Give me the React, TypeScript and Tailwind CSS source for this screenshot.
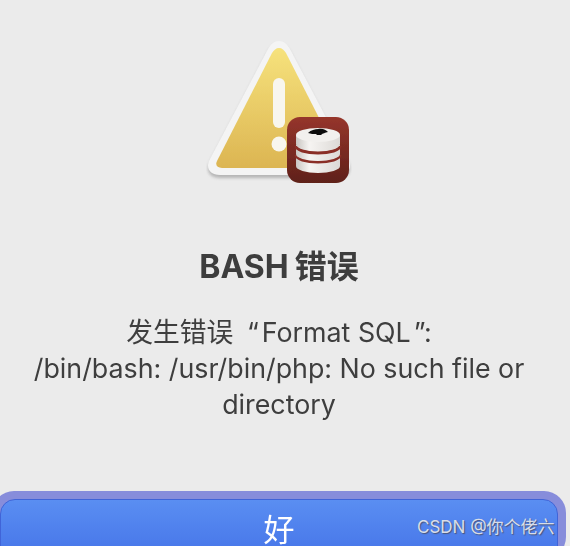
export default function App() {
  const font = { fontFamily: 'Inter, "Noto Sans CJK SC", sans-serif' };
  return (
    <div className="relative w-[570px] h-[546px] overflow-hidden bg-[#ebebeb]" style={font}>
      <div className="w-[558px] flex flex-col items-center blur-[0.4px]">
        <svg className="mt-[38px] shrink-0" width="146" height="148" viewBox="0 0 146 148">
          <defs>
            <linearGradient id="y" x1="0" y1="0" x2="0" y2="1">
              <stop offset="0" stopColor="#f6e27c" />
              <stop offset="1" stopColor="#dcb552" />
            </linearGradient>
            <linearGradient id="r" x1="0" y1="0" x2="0" y2="1">
              <stop offset="0" stopColor="#96352c" />
              <stop offset="1" stopColor="#5f2119" />
            </linearGradient>
            <linearGradient id="d" x1="0" y1="0" x2="1" y2="0">
              <stop offset="0" stopColor="#c9c6c2" />
              <stop offset="0.3" stopColor="#f6f4f2" />
              <stop offset="1" stopColor="#dcd9d6" />
            </linearGradient>
            <filter id="b" x="-20%" y="-20%" width="140%" height="140%"><feGaussianBlur stdDeviation="1.6" /></filter>
            <filter id="s" x="-5%" y="-5%" width="110%" height="110%"><feGaussianBlur stdDeviation="0.5" /></filter>
          </defs>
          <path d="M73 3 C78 3 81 6 84 11 L142 121 C147 130 142 137 132 137 L14 137 C4 137 -1 130 4 121 L62 11 C65 6 68 3 73 3 Z" fill="#a8a8a8" opacity="0.8" filter="url(#b)" transform="translate(0 3)" />
          <g filter="url(#s)">
            <path d="M73 3 C78 3 81 6 84 11 L142 121 C147 130 142 137 132 137 L14 137 C4 137 -1 130 4 121 L62 11 C65 6 68 3 73 3 Z" fill="#f4f4f4" />
            <path d="M73 10 C76 10 78 12 80 15 L135 123 C137 127 135 130 130 130 L16 130 C11 130 9 127 11 123 L66 15 C68 12 70 10 73 10 Z" fill="url(#y)" />
            <rect x="67" y="40" width="12" height="50" rx="6" fill="#f8f6ee" />
            <circle cx="73" cy="106" r="7.5" fill="#f8f6ee" />
          </g>
          <g filter="url(#s)" transform="translate(81 79)">
            <rect x="0" y="0" width="62" height="66" rx="13" fill="url(#r)" />
            <path d="M9 40 V49 A22 7 0 0 0 53 49 V40 Z" fill="url(#d)" />
            <path d="M9 38 A22 7 0 0 0 53 38" fill="none" stroke="#8a2f27" strokeWidth="3" />
            <path d="M9 28 V37 A22 7 0 0 0 53 37 V28 Z" fill="url(#d)" />
            <path d="M9 29 A22 7 0 0 0 53 29" fill="none" stroke="#8a2f27" strokeWidth="3" />
            <path d="M9 18 V27 A22 7 0 0 0 53 27 V18 Z" fill="url(#d)" />
            <ellipse cx="31" cy="18" rx="22" ry="7" fill="#f2f0ee" />
            <path d="M21 16 C24 13 28 12 31 12 C36 11 39 13 41 15 C38 16 36 16 34 18 L30 18 L29 17 C26 17 24 17 21 16 Z" fill="#111" />
          </g>
        </svg>
        <h1 className="mt-[61px] text-[32px] leading-[40px] font-bold text-[#3d3d3d]">
          BASH<span className="ml-[6px]">错误</span>
        </h1>
        <p className="mt-[27px] w-[510px] text-center text-[26.8px] leading-[36px] text-[#3e3e3e]">
          发生错误<span className="mx-[3px]"> </span><span className="mr-[3px]">“</span>Format SQL<span className="ml-[3px]">”</span>:
          <br />
          /bin/bash: /usr/bin/php: No such file or directory
        </p>
        <div className="mt-[69px] w-[574px] shrink-0 rounded-[22px] bg-[#878ddb] p-[8px] pb-0">
          <button className="w-full h-[60px] rounded-t-[15px] border border-[#4064d8] bg-gradient-to-b from-[#5a8ef2] to-[#4674e8] text-white text-[31px] leading-[60px] flex justify-center">
            好
          </button>
        </div>
      </div>
      <span className="absolute left-[417px] top-[516px] text-[17px] leading-[22px] text-[#d8dde8] [text-shadow:1px_1px_1px_#4a5578]">
        CSDN @你个佬六
      </span>
    </div>
  );
}
